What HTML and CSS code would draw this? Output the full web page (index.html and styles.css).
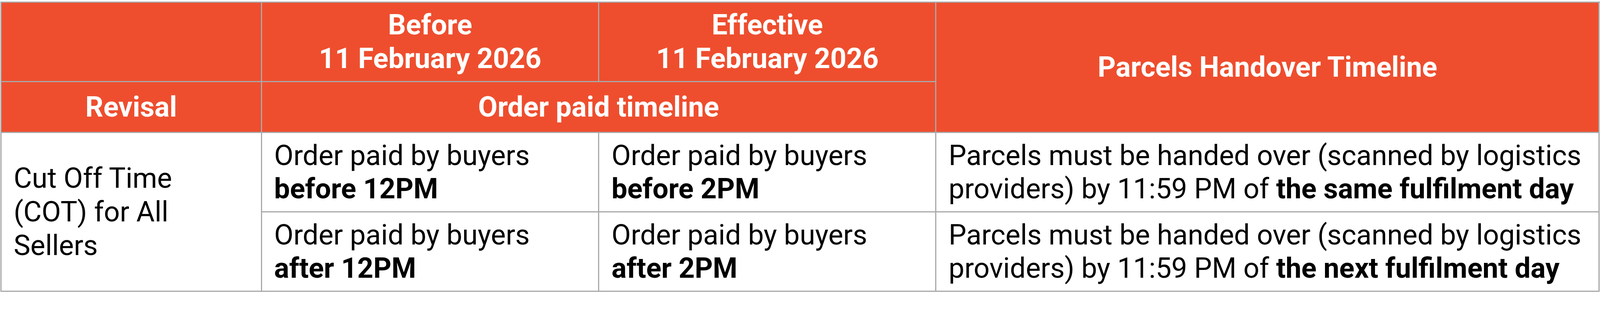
FILE: index.html
```html
<!DOCTYPE html>
<html lang="en">
<head>
<meta charset="utf-8">
<title>Cut Off Time revision</title>
<link rel="stylesheet" href="styles.css">
</head>
<body>
<div class="cot" role="table">
  <div class="cell head"></div>
  <div class="cell head"><p>Before<br>11 February 2026</p></div>
  <div class="cell head"><p>Effective<br>11 February 2026</p></div>
  <div class="cell head span-rows"><p>Parcels Handover Timeline</p></div>

  <div class="cell head"><p>Revisal</p></div>
  <div class="cell head span-cols"><p>Order paid timeline</p></div>

  <div class="cell body span-rows"><p>Cut Off Time (COT) for All Sellers</p></div>
  <div class="cell body"><p>Order paid by buyers<br><strong>before 12PM</strong></p></div>
  <div class="cell body"><p>Order paid by buyers<br><strong>before 2PM</strong></p></div>
  <div class="cell body"><p>Parcels must be handed over (scanned by logistics<br>providers) by 11:59 PM of <strong>the same fulfilment day</strong></p></div>

  <div class="cell body"><p>Order paid by buyers<br><strong>after 12PM</strong></p></div>
  <div class="cell body"><p>Order paid by buyers<br><strong>after 2PM</strong></p></div>
  <div class="cell body"><p>Parcels must be handed over (scanned by logistics<br>providers) by 11:59 PM of <strong>the next fulfilment day</strong></p></div>
</div>
</body>
</html>
```
FILE: styles.css
```css
:root {
  /* one unit of the 4215px-wide design, tied to the viewport width */
  --u: calc(100vw / 4215);
  --line: calc(4 * var(--u));
  --rule: #a9a9a9;
}

html, body {
  margin: 0;
  padding: 0;
  background: #ffffff;
}

body {
  padding: calc(4 * var(--u)) 0 0 calc(1 * var(--u));
  font-family: Roboto, "Liberation Sans", Arial, sans-serif;
  font-size: calc(74 * var(--u));
  line-height: calc(88 * var(--u));
  color: #000000;
}

.cot {
  display: grid;
  grid-template-columns:
    calc(686 * var(--u))
    calc(889 * var(--u))
    calc(888 * var(--u))
    calc(1747 * var(--u));
  grid-template-rows:
    calc(209 * var(--u))
    calc(134 * var(--u))
    calc(209 * var(--u))
    calc(209 * var(--u));
  width: calc(4214 * var(--u));
  box-sizing: border-box;
  border-top: var(--line) solid var(--rule);
  border-left: var(--line) solid var(--rule);
}

.cell {
  box-sizing: border-box;
  border-right: var(--line) solid var(--rule);
  border-bottom: var(--line) solid var(--rule);
  padding: 0 calc(32 * var(--u));
  display: flex;
  align-items: center;
  min-width: 0;
}

.cell p {
  margin: 0;
}

.head {
  background: #ee4e2e;
  color: #ffffff;
  font-weight: 700;
  text-align: center;
  justify-content: center;
}

.body {
  text-align: left;
  font-weight: 400;
  justify-content: flex-start;
}

.body strong {
  font-weight: 700;
}

.span-rows {
  grid-row: span 2;
}

.span-cols {
  grid-column: span 2;
}
```
